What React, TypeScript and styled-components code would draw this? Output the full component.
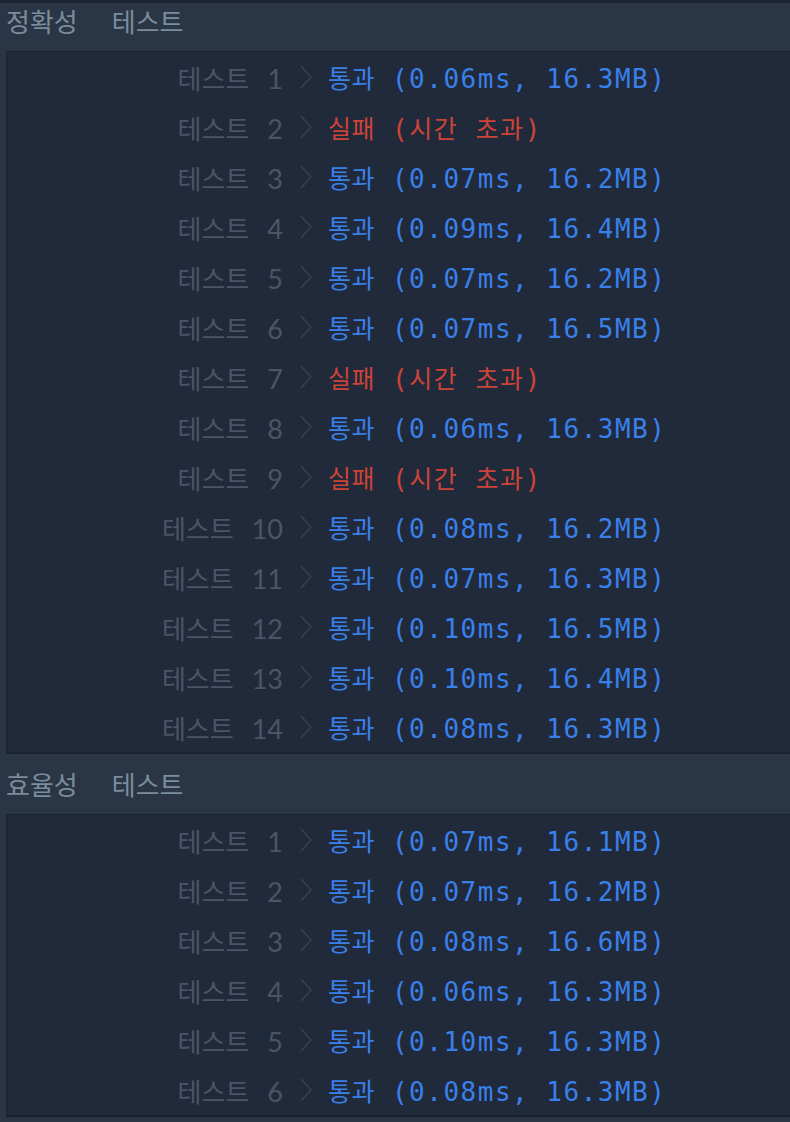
import React from "react"
import styled, { createGlobalStyle } from "styled-components"

const GlobalStyle = createGlobalStyle`
  html, body {
    margin: 0;
    padding: 0;
    background: #2a3546;
    overflow: hidden;
  }
`

const Page = styled.div`
  width: 790px;
  height: 1122px;
  overflow: hidden;
  background: #2a3546;
  font-family: Lato, "Noto Sans CJK KR", sans-serif;
`

const PrevEdge = styled.div`
  height: 3px;
  background: #1d2532;
`

const Header = styled.div<{ $height: number }>`
  height: ${(p) => p.$height}px;
  display: flex;
  align-items: flex-end;
  padding: 0 0 0 6px;
  box-sizing: border-box;
  color: #7b8c9d;
  font-size: 26px;
  gap: 34px;
  span {
    line-height: 36px;
    padding-bottom: 11px;
  }
`

const Box = styled.div`
  margin-left: 6px;
  background: #212a3a;
  border: 1px solid #1a2130;
  border-right: none;
  border-bottom-width: 2px;
`

const Row = styled.div`
  height: 50px;
  display: flex;
  align-items: center;
`

const Label = styled.div`
  width: 276px;
  display: flex;
  justify-content: flex-end;
  align-items: baseline;
  gap: 18px;
  color: #4a5567;
  font-size: 26px;
  font-family: Lato, "Noto Sans CJK KR", sans-serif;
`

const Num = styled.span`
  font-size: 27px;
`

const Chevron = styled.div`
  width: 45px;
  display: flex;
  justify-content: center;
  align-items: center;
  svg {
    display: block;
  }
`

const Result = styled.div<{ $fail?: boolean }>`
  color: ${(p) => (p.$fail ? "#cc4438" : "#3a80ea")};
  font-family: "DejaVu Sans Mono", "Noto Sans CJK KR", monospace;
  font-size: 26px;
  letter-spacing: 1.5px;
  white-space: pre;
`

const Hangul = styled.span<{ $wide?: boolean }>`
  font-size: 25px;
  letter-spacing: ${(p) => (p.$wide ? 1.6 : 0.4)}px;
`

type Test = { n: number; fail?: boolean; ms?: string; mb?: string }

const accuracy: Test[] = [
  { n: 1, ms: "0.06", mb: "16.3" },
  { n: 2, fail: true },
  { n: 3, ms: "0.07", mb: "16.2" },
  { n: 4, ms: "0.09", mb: "16.4" },
  { n: 5, ms: "0.07", mb: "16.2" },
  { n: 6, ms: "0.07", mb: "16.5" },
  { n: 7, fail: true },
  { n: 8, ms: "0.06", mb: "16.3" },
  { n: 9, fail: true },
  { n: 10, ms: "0.08", mb: "16.2" },
  { n: 11, ms: "0.07", mb: "16.3" },
  { n: 12, ms: "0.10", mb: "16.5" },
  { n: 13, ms: "0.10", mb: "16.4" },
  { n: 14, ms: "0.08", mb: "16.3" },
]

const efficiency: Test[] = [
  { n: 1, ms: "0.07", mb: "16.1" },
  { n: 2, ms: "0.07", mb: "16.2" },
  { n: 3, ms: "0.08", mb: "16.6" },
  { n: 4, ms: "0.06", mb: "16.3" },
  { n: 5, ms: "0.10", mb: "16.3" },
  { n: 6, ms: "0.08", mb: "16.3" },
]

function ChevronIcon() {
  return (
    <svg width="12" height="24" viewBox="0 0 12 24">
      <polyline points="1,1 11,12 1,23" fill="none" stroke="#364152" strokeWidth="1.5" />
    </svg>
  )
}

function TestRow({ t }: { t: Test }) {
  return (
    <Row>
      <Label>
        <span>테스트</span>
        <Num>{t.n}</Num>
      </Label>
      <Chevron>
        <ChevronIcon />
      </Chevron>
      {t.fail ? (
        <Result $fail>
          <Hangul>실패</Hangul> (<Hangul $wide>시간</Hangul> <Hangul $wide>초과</Hangul>)
        </Result>
      ) : (
        <Result>
          <Hangul>통과</Hangul>
          {` (${t.ms}ms, ${t.mb}MB)`}
        </Result>
      )}
    </Row>
  )
}

export default function App() {
  return (
    <Page>
      <GlobalStyle />
      <PrevEdge />
      <Header $height={48}>
        <span>정확성</span>
        <span>테스트</span>
      </Header>
      <Box>
        {accuracy.map((t) => (
          <TestRow key={t.n} t={t} />
        ))}
      </Box>
      <Header $height={60}>
        <span>효율성</span>
        <span>테스트</span>
      </Header>
      <Box>
        {efficiency.map((t) => (
          <TestRow key={t.n} t={t} />
        ))}
      </Box>
    </Page>
  )
}
